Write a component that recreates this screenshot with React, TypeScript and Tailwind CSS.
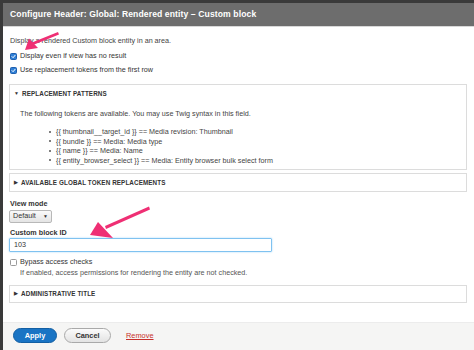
import React from "react";

const font = { fontFamily: '"Liberation Sans", Arial, sans-serif' };

function CheckedBox() {
  return (
    <span className="inline-flex items-center justify-center w-[7px] h-[7px] rounded-[1.5px] bg-[#2f7fd6] border border-[#1f5fae] mr-[3px] shrink-0">
      <svg width="5" height="5" viewBox="0 0 10 10">
        <path d="M2 5.2 L4.2 7.4 L8.2 2.6" stroke="#fff" strokeWidth="2" fill="none" strokeLinecap="round" strokeLinejoin="round" />
      </svg>
    </span>
  );
}

function UncheckedBox() {
  return (
    <span className="inline-block w-[7px] h-[7px] rounded-[1.5px] bg-white border border-[#9a9a9a] mr-[3px] shrink-0" />
  );
}

function Legend({ open, text }: { open: boolean; text: string }) {
  return (
    <div className="flex items-center h-[10px] text-[6.3px] font-bold tracking-[0.1px] text-[#333] pl-[4px]">
      <span className="text-[5px] mr-[3px] text-[#333]">{open ? "▼" : "▶"}</span>
      {text}
    </div>
  );
}

export default function App() {
  return (
    <div className="relative w-[474px] h-[350px] overflow-hidden bg-[#3a3a3a] pl-[3px] pt-[3px]" style={font}>
      <div className="flex flex-col h-full bg-white">
        <div className="h-[24px] shrink-0 bg-[#6d6d6d] border-b border-[#d8d8d8] flex items-center pl-[7px] text-white font-bold text-[8.6px] tracking-[0.1px]">
          Configure Header: Global: Rendered entity – Custom block
        </div>
        <div className="flex flex-col pl-[6px] pr-[7px] text-[7.2px] text-[#444]">
          <div className="mt-[9px] h-[10px] leading-[10px] ml-[1px]">
            Display a rendered Custom block entity in an area.
          </div>
          <div className="mt-[5px] h-[11px] flex items-center ml-[1px] text-[#333]">
            <CheckedBox />
            Display even if view has no result
          </div>
          <div className="mt-[3px] h-[11px] flex items-center ml-[1px] text-[#333]">
            <CheckedBox />
            Use replacement tokens from the first row
          </div>

          <div className="mt-[8px] border border-[#dcdcdc] flex flex-col pb-[4px]">
            <div className="mt-[4px]">
              <Legend open text="REPLACEMENT PATTERNS" />
            </div>
            <div className="mt-[10px] h-[10px] leading-[10px] pl-[10px]">
              The following tokens are available. You may use Twig syntax in this field.
            </div>
            <ul className="mt-[8px] pl-[39px]">
              {[
                "{{ thumbnail__target_id }} == Media revision: Thumbnail",
                "{{ bundle }} == Media: Media type",
                "{{ name }} == Media: Name",
                "{{ entity_browser_select }} == Media: Entity browser bulk select form",
              ].map((t) => (
                <li key={t} className="h-[9.5px] leading-[9.5px] flex items-center">
                  <span className="w-[5px] h-[5px] flex items-center mr-[2px]">
                    <span className="w-[2px] h-[2px] rounded-full bg-[#555]" />
                  </span>
                  {t}
                </li>
              ))}
            </ul>
          </div>

          <div className="mt-[3px] border border-[#dcdcdc] h-[19px] flex items-center">
            <Legend open={false} text="AVAILABLE GLOBAL TOKEN REPLACEMENTS" />
          </div>

          <div className="mt-[7px] h-[10px] leading-[10px] ml-[1px] font-bold text-[#333]">View mode</div>
          <div className="mt-[1px] ml-[0px] w-[43px] h-[13px] rounded-[2px] border border-[#b8b8b8] bg-gradient-to-b from-[#fafafa] to-[#e4e4e4] flex items-center justify-between px-[3px] text-[#333]">
            <span>Default</span>
            <span className="text-[5px]">▼</span>
          </div>

          <div className="mt-[5px] h-[10px] leading-[10px] ml-[1px] font-bold text-[#333]">Custom block ID</div>
          <div className="mt-[0px] w-[263px] h-[14px] border border-[#7fc2f0] rounded-[1px] shadow-[0_0_2px_#9fd4fa] flex items-center pl-[4px] text-[#333]">
            103
          </div>

          <div className="mt-[5px] h-[10px] flex items-center ml-[1px] text-[#333]">
            <UncheckedBox />
            Bypass access checks
          </div>
          <div className="mt-[1px] h-[10px] leading-[10px] pl-[11px] text-[#555]">
            If enabled, access permissions for rendering the entity are not checked.
          </div>

          <div className="mt-[7px] border border-[#dcdcdc] h-[18px] flex items-center">
            <Legend open={false} text="ADMINISTRATIVE TITLE" />
          </div>
        </div>

        <div className="mt-auto h-[28px] bg-[#f5f5f4] border-t border-[#ececec] flex items-center pl-[10px] pb-[2px]">
          <div className="w-[44px] h-[15px] rounded-full bg-[#1a74c4] border border-[#135fa3] flex items-center justify-center text-white font-bold text-[7.4px]">
            Apply
          </div>
          <div className="ml-[7px] w-[47px] h-[15px] rounded-full bg-gradient-to-b from-[#fbfbfb] to-[#e3e3e3] border border-[#a9a9a9] flex items-center justify-center text-[#333] font-bold text-[7.4px]">
            Cancel
          </div>
          <div className="ml-[15px] text-[#c7302b] underline text-[7.4px]">Remove</div>
        </div>
      </div>

      <svg className="absolute inset-0 pointer-events-none" width="474" height="350" viewBox="0 0 474 350">
        <g fill="#ef2f74">
          <polygon points="58,32 59,34.5 33,45 32,42.5" />
          <polygon points="25,50 29,38.5 38,48" />
          <polygon points="149,206.5 150,209.5 106,229 105,226" />
          <polygon points="90,235 98,222 113,238" />
        </g>
      </svg>
    </div>
  );
}
